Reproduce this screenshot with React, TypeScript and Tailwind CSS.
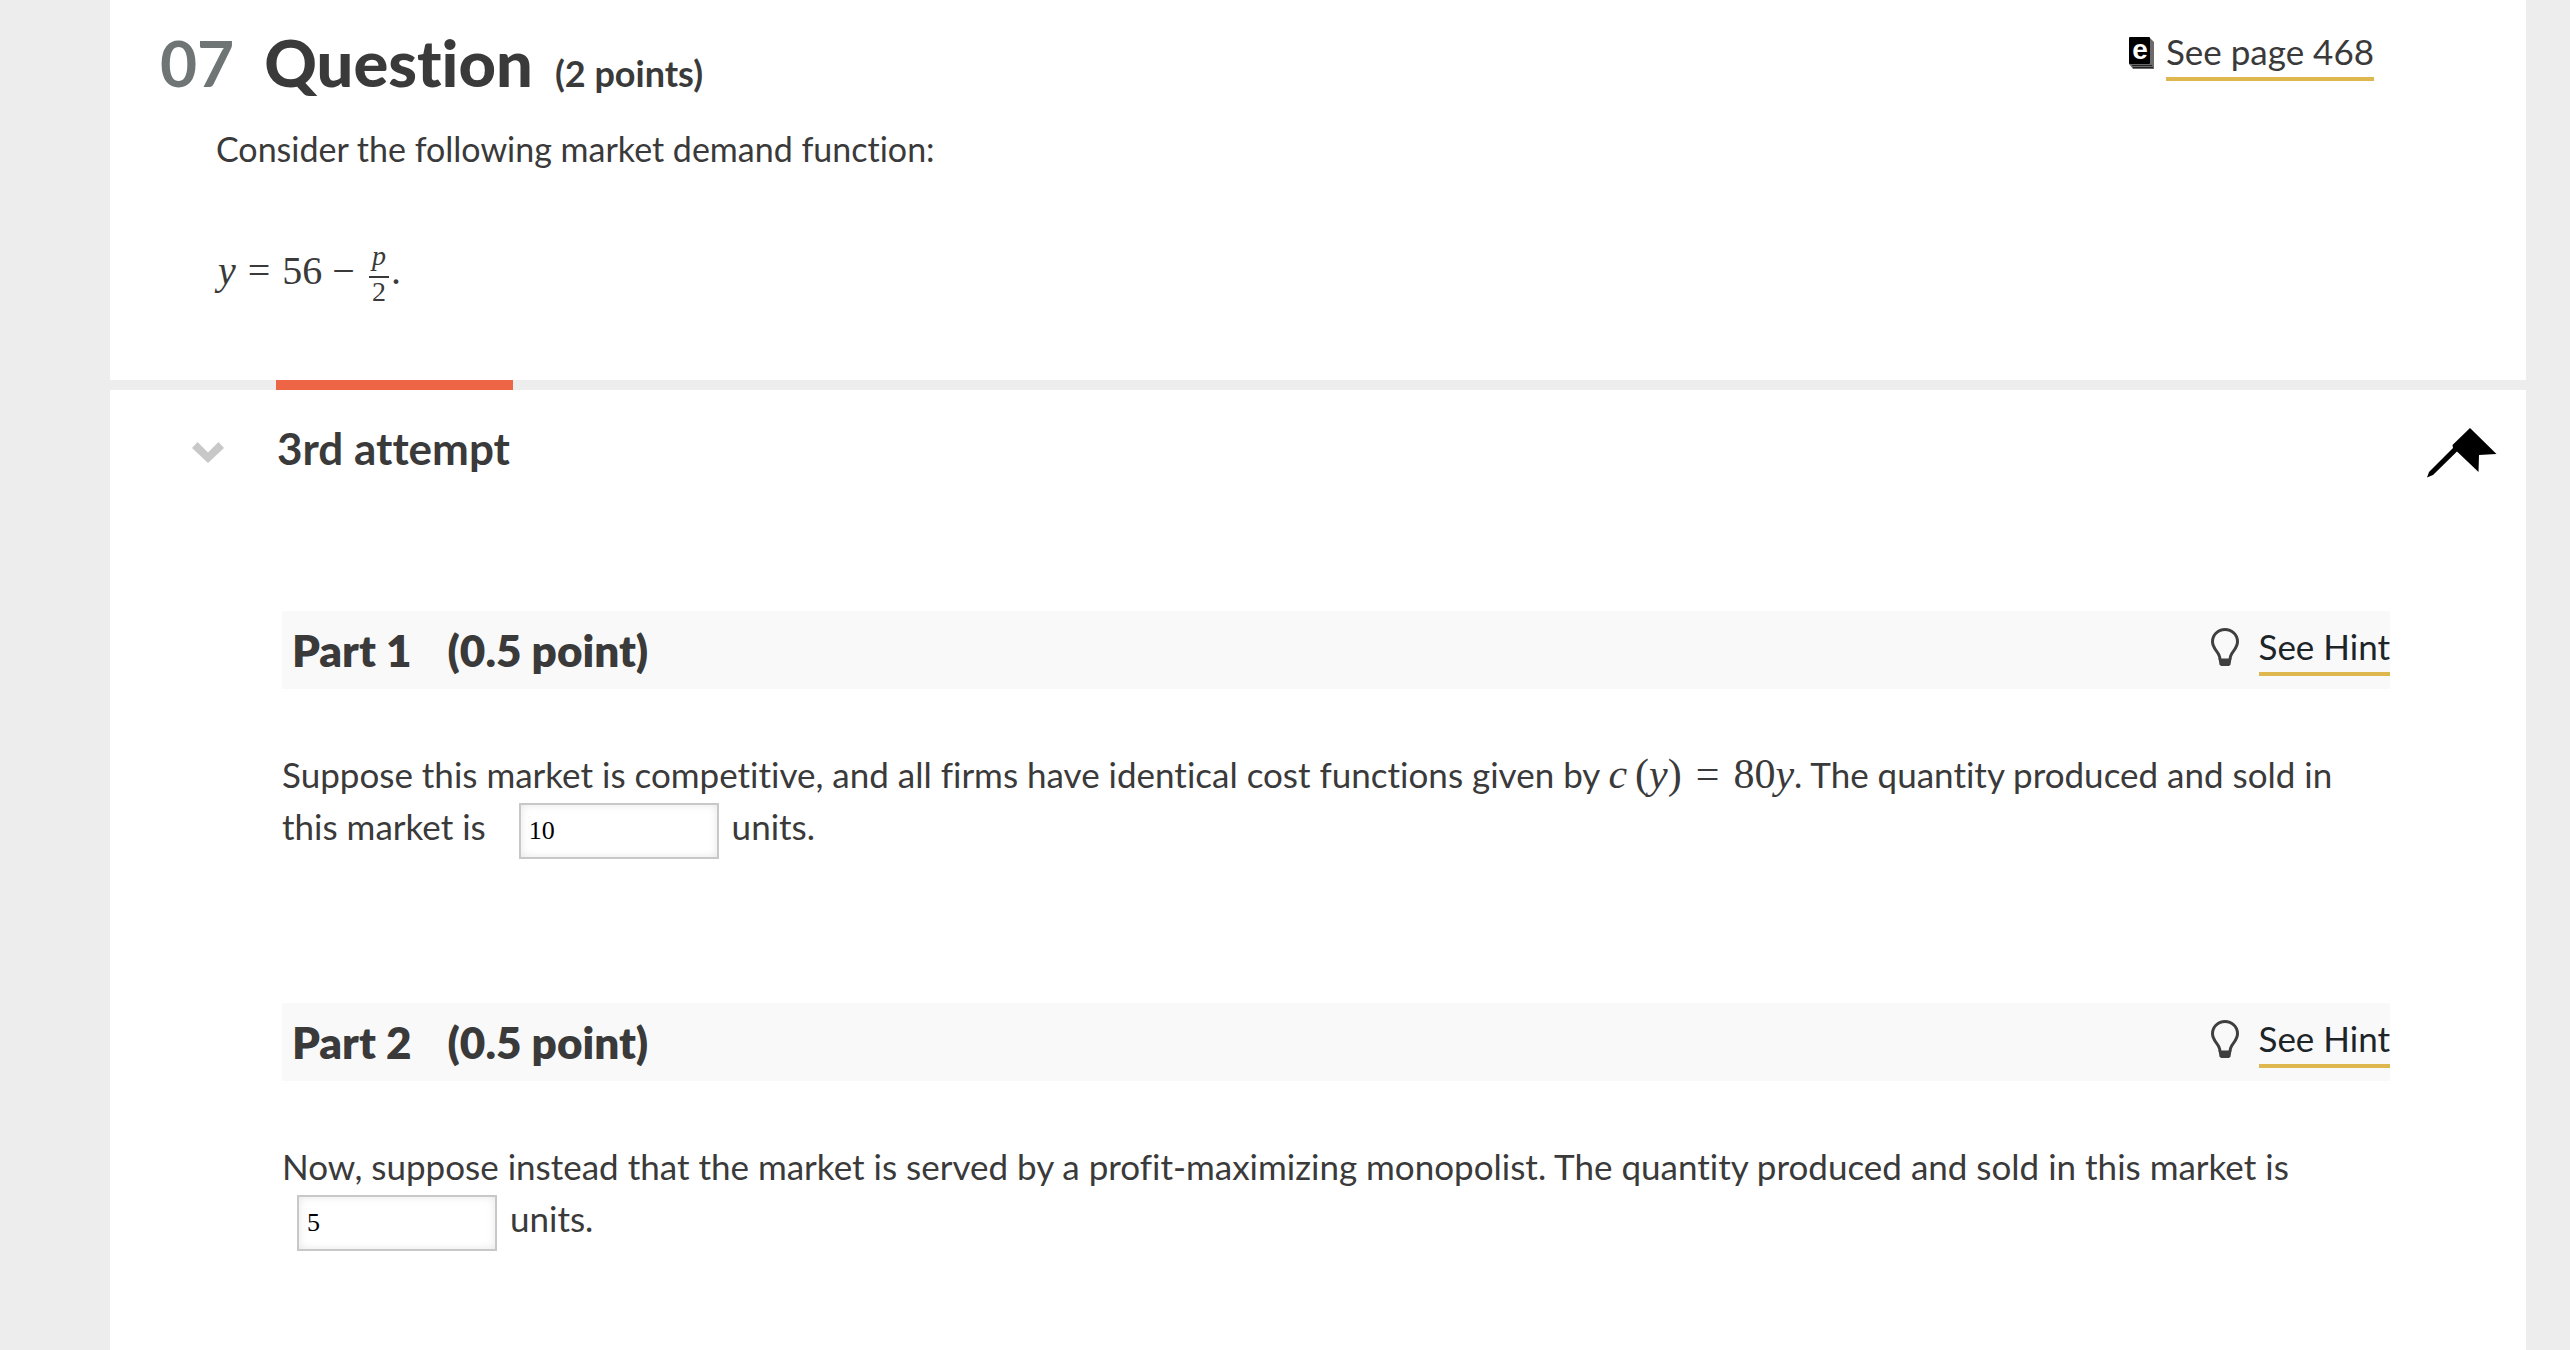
import type { ReactNode } from 'react';

export default function App() {
  return (
    <div className="min-h-screen bg-[#ededed] pl-[110px] pr-[44px] font-['Lato',sans-serif] text-[#3a3a3a] [font-variant-ligatures:none]">
      <main className="min-h-screen bg-white">
        <header className="pl-[50px] pr-[152px] pt-[22px] pb-[74px]">
          <div className="flex items-start justify-between">
            <h1 className="flex items-baseline text-[65px] leading-[80px] font-black">
              <span className="mr-[30px] text-[64px] font-bold text-[#6f7575]">07</span>
              Question
              <span className="ml-[22px] text-[36px] leading-[52px] font-bold">(2 points)</span>
            </h1>
            <div className="mt-[7px] flex items-start gap-3">
              <EbookIcon />
              <UnderlinedLink href="#page-468">See page 468</UnderlinedLink>
            </div>
          </div>

          <div className="pl-[56px]">
            <p className="mt-5 text-[34px] leading-[52px]">
              Consider the following market demand function:
            </p>
            <DemandFunction />
          </div>
        </header>

        <section>
          <div className="h-[10px] bg-[#ededed] pl-[166px]">
            <div className="h-full w-[237px] bg-[#ed6545]" />
          </div>

          <div className="flex items-start pl-[82px] pr-[29px] pt-8">
            <button type="button" aria-label="Collapse attempt" className="mt-5">
              <svg width="32" height="21" viewBox="0 0 32 21" fill="#c8c8c8">
                <path d="M5.500 0 16 10.500 26.500 0 32 6 16 21 0 6z" />
              </svg>
            </button>
            <h2 className="ml-[53px] text-[44px] leading-[52px] font-bold">3rd attempt</h2>
            <button type="button" aria-label="Pin question" className="mt-1.5 ml-auto">
              <PinIcon />
            </button>
          </div>

          <div className="flex flex-col gap-[151px] pt-[133px] pr-[136px] pl-[172px]">
            <Part number={1} points="(0.5 point)">
              Suppose this market is competitive, and all firms have identical cost functions given by{' '}
              <CostFunction />. The quantity produced and sold in this market is&nbsp;{' '}
              <AnswerInput label="Part 1 quantity" value="10" /> units.
            </Part>
            <Part number={2} points="(0.5 point)">
              Now, suppose instead that the market is served by a profit-maximizing monopolist. The
              quantity produced and sold in this market is{' '}
              <AnswerInput label="Part 2 quantity" value="5" /> units.
            </Part>
          </div>
        </section>
      </main>
    </div>
  );
}

function Part({ number, points, children }: { number: number; points: string; children: ReactNode }) {
  return (
    <article>
      <div className="flex items-center justify-between bg-[#f9f9f9] py-[13px] pl-[10px]">
        <h3 className="flex gap-9 text-[44px] leading-[52px] font-extrabold">
          <span>Part {number}</span>
          <span>{points}</span>
        </h3>
        <div className="flex items-start gap-5 text-[#1d2529]">
          <BulbIcon />
          <UnderlinedLink href={`#hint-${number}`}>See Hint</UnderlinedLink>
        </div>
      </div>
      <p className="mt-[59px] text-[35px] leading-[52px]">{children}</p>
    </article>
  );
}

function UnderlinedLink({ href, children }: { href: string; children: ReactNode }) {
  return (
    <a href={href} className="border-b-4 border-[#deb84f] pb-1 text-[35px] leading-[44px]">
      {children}
    </a>
  );
}

function AnswerInput({ label, value }: { label: string; value: string }) {
  return (
    <input
      type="text"
      aria-label={label}
      defaultValue={value}
      className="-my-2 mr-1 ml-[15px] h-[56px] w-[200px] border-2 border-[#c8c8c8] bg-white px-2 align-middle font-['Liberation_Serif',serif] text-[26px] text-black shadow-[inset_0_0_8px_rgba(0,0,0,0.1)]"
    />
  );
}

function DemandFunction() {
  return (
    <div className="mt-[61px] flex items-center pl-[2px] font-['Liberation_Serif',serif] text-[40px] leading-[52px]">
      <i>y</i>
      <span className="ml-3">=</span>
      <span className="ml-3">56</span>
      <span className="ml-[10px]">−</span>
      <span className="ml-[14px] flex flex-col items-center text-[28px]">
        <i className="border-b-2 border-[#3a3a3a] px-[3px] leading-[40px]">p</i>
        <span className="leading-[28px]">2</span>
      </span>
      <span className="ml-[2px]">.</span>
    </div>
  );
}

function CostFunction() {
  return (
    <span className="font-['Liberation_Serif',serif] text-[42px] leading-none">
      <i>c</i>
      <span className="ml-2">(</span>
      <i>y</i>)<span className="mx-[14px]">=</span>80<i>y</i>
    </span>
  );
}

function EbookIcon() {
  return (
    <svg className="mt-2 overflow-visible" width="25" height="32" viewBox="0 0 25 32">
      <path d="M21 1l4 4v27H4l-4-5z" fill="#6b6b6b" />
      <path d="M3 28.500h20M4 30.500h20" stroke="#222" strokeWidth="1" />
      <rect width="21" height="27" rx="1" fill="#000" />
      <text
        x="11"
        y="22"
        textAnchor="middle"
        fill="#fff"
        className="font-['Liberation_Sans',sans-serif] text-[28px] font-bold"
      >
        e
      </text>
    </svg>
  );
}

function PinIcon() {
  return (
    <svg width="70" height="50" viewBox="0 0 70 50" fill="#000">
      <path d="M43 0 69.500 26 52 27 51.500 44 30 23.500 6 47 0 49.500 2 44 26 20 25.500 17z" />
    </svg>
  );
}

function BulbIcon() {
  return (
    <svg className="mt-1" width="28" height="38" viewBox="0 0 28 38">
      <path
        d="M9 31.500C9 23.500 1.500 22 1.500 13.500a12.500 12 0 0 1 25 0C26.500 22 19 23.500 19 31.500"
        fill="none"
        stroke="#3f3f3f"
        strokeWidth="3"
      />
      <path d="M7.500 30.500h13L19.500 36.500 18 38h-8l-1.500-1.500z" fill="#3f3f3f" />
    </svg>
  );
}
